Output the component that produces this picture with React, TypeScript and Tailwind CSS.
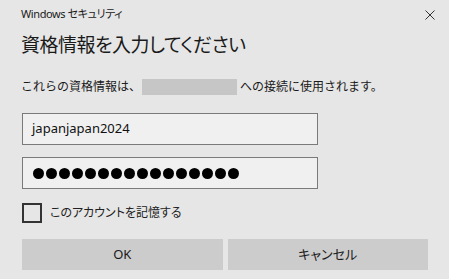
import React from 'react';

const font = { fontFamily: '"Noto Sans", "Noto Sans CJK JP", sans-serif' };

export default function App() {
  const dots = Array.from({ length: 16 });
  return (
    <div className="relative w-[449px] h-[279px] bg-[#e6e6e6] text-[#1a1a1a] overflow-hidden" style={font}>
      {/* Close */}
      <button className="absolute right-[13px] top-[9px] w-[11px] h-[11px] text-[#333]">
        <svg viewBox="0 0 10 10" width="10" height="10">
          <path d="M0.5 0.5 L9.5 9.5 M9.5 0.5 L0.5 9.5" stroke="#333" strokeWidth="1" fill="none" />
        </svg>
      </button>

      <div className="flex flex-col pl-[22px] pr-[21px]">
        <div className="pt-[6px] text-[11px] leading-[16px] -ml-[1px] tracking-[-0.4px] [font-feature-settings:'palt']">Windows セキュリティ</div>
        <div className="mt-[9px] text-[19px] leading-[28px] -ml-[1px] tracking-[-0.5px] [font-feature-settings:'palt']">資格情報を入力してください</div>

        <div className="mt-[20px] flex items-center text-[12px] leading-[16px] -ml-[1px]">
          <span>これらの資格情報は、</span>
          <span className="inline-block w-[95px] h-[16px] bg-[#c6c6c6] ml-[1px] mr-[3px]" />
          <span>への接続に使用されます。</span>
        </div>

        <div className="mt-[18px] w-[296px] h-[32px] border border-[#7a7a7a] bg-[#f0f0f0] flex items-center pl-[9px] text-[13px] text-[#111]">
          japanjapan2024
        </div>

        <div className="mt-[12px] w-[296px] h-[32px] border border-[#7a7a7a] bg-[#f0f0f0] flex items-center pl-[10px] gap-[2px]">
          {dots.map((_, i) => (
            <span key={i} className="w-[11px] h-[11px] rounded-full bg-black" />
          ))}
        </div>

        <div className="mt-[14px] flex items-center gap-[8px]">
          <span className="w-[20px] h-[20px] border-2 border-[#333]" />
          <span className="text-[12px] leading-[16px] text-[#222] [font-feature-settings:'palt']">このアカウントを記憶する</span>
        </div>

        <div className="mt-[16px] flex gap-[5px] w-[406px]">
          <button className="flex-1 h-[31px] bg-[#cccccc] text-[13px] text-[#1a1a1a] flex items-center justify-center">OK</button>
          <button className="flex-1 h-[31px] bg-[#cccccc] text-[13px] text-[#1a1a1a] flex items-center justify-center [font-feature-settings:'palt']">キャンセル</button>
        </div>
      </div>
    </div>
  );
}
